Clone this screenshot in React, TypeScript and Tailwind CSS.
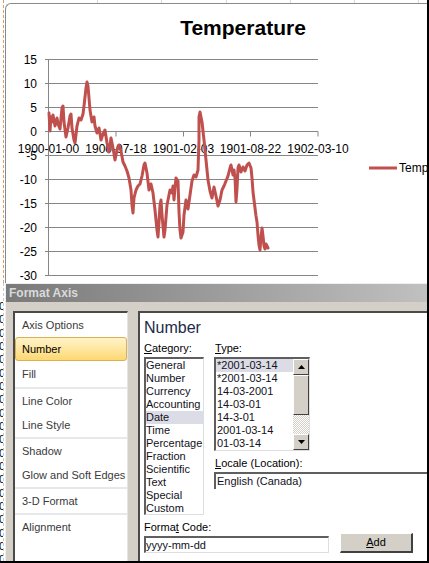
import React from "react";

const pts: [number, number][] = [
  [49, 113], [50, 131], [51, 117], [52, 122], [53, 115], [55, 126], [57, 118], [58, 124], [60, 129],
  [62, 108], [63, 106], [64, 122], [66, 137], [68, 128], [70, 116], [71, 114], [72, 128], [74, 140],
  [75, 143], [77, 126], [79, 118], [81, 120], [83, 114], [84, 106], [85, 97], [86, 88], [87, 82],
  [88, 86], [89, 98], [90, 110], [92, 122], [94, 117], [95, 126], [97, 133], [99, 128], [101, 140],
  [103, 134], [105, 130], [107, 143], [109, 152], [111, 138], [113, 148], [115, 160], [117, 150],
  [119, 145], [121, 151], [123, 162], [125, 166], [127, 171], [129, 178], [131, 190], [132, 205],
  [133, 213], [134, 198], [136, 190], [138, 186], [140, 184], [142, 176], [144, 165], [145, 163],
  [147, 173], [149, 190], [151, 184], [153, 193], [155, 210], [157, 230], [158, 237], [159, 222],
  [160, 205], [161, 200], [162, 215], [164, 237], [165, 230], [167, 205], [169, 195], [170, 190],
  [172, 193], [173, 186], [174, 200], [175, 188], [176, 178], [178, 181], [179, 212], [180, 230],
  [181, 238], [183, 232], [184, 215], [186, 200], [188, 209], [190, 195], [192, 181], [194, 175],
  [196, 177], [198, 170], [199, 140], [199, 117], [200, 112], [202, 122], [204, 140], [206, 160],
  [208, 180], [210, 191], [212, 198], [214, 187], [216, 196], [218, 206], [220, 200], [222, 190],
  [224, 186], [226, 181], [228, 176], [230, 168], [231, 165], [233, 175], [234, 170], [235, 178],
  [236, 202], [237, 189], [238, 168], [239, 165], [241, 172], [243, 167], [245, 171], [247, 165],
  [249, 163], [251, 168], [252, 178], [253, 192], [254, 200], [255, 208], [256, 216], [257, 222],
  [258, 235], [259, 245], [260, 250], [261, 238], [262, 228], [263, 236], [264, 246], [265, 249],
  [266, 244], [268, 248],
];
const lineD = "M" + pts.map(([x, y]) => `${x} ${y}`).join(" L");

const yLabels = [15, 10, 5, 0, -5, -10, -15, -20, -25, -30];
const xTicks = [48.5, 116, 183.5, 250.5, 318];
const xLabels = ["1900-01-00", "1900-07-18", "1901-02-03", "1901-08-22", "1902-03-10"];

function Chart() {
  return (
    <div className="h-[280px] border-l border-t border-[#8a8a8a] rounded-tl-[6px] bg-white overflow-hidden">
      <svg width="421" height="279" viewBox="6 4 421 279" className="block">
        <text x="243" y="35" textAnchor="middle" fontSize="21" fontWeight="700" fill="#000">
          Temperature
        </text>
        {yLabels.map((v, i) => {
          const y = 59.5 + 24 * i;
          return (
            <g key={v}>
              <line x1="45" x2="318" y1={y} y2={y} stroke="#868686" strokeWidth="1" />
              <text x="37" y={y + 4.5} textAnchor="end" fontSize="12" fill="#000">
                {v}
              </text>
            </g>
          );
        })}
        <line x1="48.5" x2="48.5" y1="59.5" y2="275.5" stroke="#868686" strokeWidth="1" />
        {xTicks.map((x) => (
          <line key={x} x1={x} x2={x} y1="131.5" y2="136.5" stroke="#868686" strokeWidth="1" />
        ))}
        {xLabels.map((l, i) => (
          <text key={l} x={xTicks[i]} y="152.5" textAnchor="middle" fontSize="12" fill="#000">
            {l}
          </text>
        ))}
        <path d={lineD} fill="none" stroke="#c0504d" strokeWidth="3" strokeLinejoin="round" strokeLinecap="round" />
        <line x1="369" x2="397" y1="168" y2="168" stroke="#c0504d" strokeWidth="3" />
        <text x="399" y="172" fontSize="12" fill="#000">
          Temperature
        </text>
      </svg>
    </div>
  );
}

function MenuItem({ label, h }: { label: string; h: string }) {
  return (
    <div className={`${h} flex items-center pl-[7px] text-[11px] text-[#3a3a3a]`}>{label}</div>
  );
}

function Sep() {
  return <div className="h-[2px] bg-[#e6e8ea]" />;
}

function LeftPanel() {
  return (
    <div className="w-[115px] shrink-0 bg-white border-t-2 border-l-2 border-r border-t-[#4a4a4a] border-l-[#4a4a4a] border-r-[#e4e4e4] overflow-hidden">
      <MenuItem label="Axis Options" h="h-[24px]" />
      <div className="h-[24px] flex items-center pl-[6px] text-[11px] text-black border border-[#dcae55] rounded-[3px] bg-linear-to-b from-[#fff4c8] to-[#fdd872]">
        Number
      </div>
      <MenuItem label="Fill" h="h-[26px]" />
      <Sep />
      <MenuItem label="Line Color" h="h-[24px]" />
      <MenuItem label="Line Style" h="h-[24px]" />
      <Sep />
      <MenuItem label="Shadow" h="h-[24px]" />
      <MenuItem label="Glow and Soft Edges" h="h-[24px]" />
      <Sep />
      <MenuItem label="3-D Format" h="h-[24px]" />
      <Sep />
      <MenuItem label="Alignment" h="h-[24px]" />
    </div>
  );
}

const categories = [
  "General", "Number", "Currency", "Accounting", "Date", "Time",
  "Percentage", "Fraction", "Scientific", "Text", "Special", "Custom",
];
const types = ["*2001-03-14", "*2001-03-14", "14-03-2001", "14-03-01", "14-3-01", "2001-03-14", "01-03-14"];

function Arrow({ up }: { up: boolean }) {
  return (
    <svg width="7" height="4" viewBox="0 0 7 4" className="block">
      {up ? <polygon points="3.5,0 7,4 0,4" fill="#000" /> : <polygon points="0,0 7,0 3.5,4" fill="#000" />}
    </svg>
  );
}

function RightPanel() {
  return (
    <div className="flex-1 ml-[10px] bg-white border-t-2 border-l-2 border-[#4a4a4a] overflow-hidden pl-[4px] pt-[5px] text-[#111122]">
      <div className="text-[16px] leading-[20px] text-[#1c2a48]">Number</div>
      <div className="mt-[3px] flex gap-[10px]">
        <div className="w-[60px] shrink-0">
          <div className="text-[11px] leading-[14px] text-black">
            <span className="underline">C</span>ategory:
          </div>
          <div className="mt-[2px] h-[158px] overflow-hidden border-t-2 border-l-2 border-r border-b border-t-[#5f5f5f] border-l-[#5f5f5f] border-r-[#dedede] border-b-[#dedede]">
            {categories.map((c) => (
              <div
                key={c}
                className={`h-[13px] text-[11px] leading-[13px] whitespace-nowrap ${c === "Date" ? "bg-[#dcdce6]" : ""}`}
              >
                {c}
              </div>
            ))}
          </div>
        </div>
        <div className="flex-1 min-w-0">
          <div className="text-[11px] leading-[14px] text-black pl-[1px]">
            <span className="underline">T</span>ype:
          </div>
          <div className="mt-[2px] w-[96px] h-[94px] flex border-t-2 border-l-2 border-r border-b border-t-[#5f5f5f] border-l-[#5f5f5f] border-r-[#dedede] border-b-[#dedede]">
            <div className="flex-1 overflow-hidden">
              {types.map((t, i) => (
                <div
                  key={i}
                  className={`h-[13px] pl-[1px] text-[11px] leading-[13px] whitespace-nowrap ${i === 0 ? "bg-[#dcdce6]" : ""}`}
                >
                  {t}
                </div>
              ))}
            </div>
            <div className="w-[16px] flex flex-col">
              <div className="h-[16px] flex items-center justify-center bg-[#d4d0c8] border-t border-l border-r border-b border-t-white border-l-white border-r-[#404040] border-b-[#404040]">
                <Arrow up />
              </div>
              <div className="h-[40px] bg-[#d4d0c8] border-t border-l border-r border-b border-t-white border-l-white border-r-[#404040] border-b-[#404040]" />
              <div className="flex-1 bg-[repeating-conic-gradient(#d4d0c8_0%_25%,#ffffff_0%_50%)] bg-[length:2px_2px]" />
              <div className="h-[16px] flex items-center justify-center bg-[#d4d0c8] border-t border-l border-r border-b border-t-white border-l-white border-r-[#404040] border-b-[#404040]">
                <Arrow up={false} />
              </div>
            </div>
          </div>
          <div className="mt-[5px] text-[11px] leading-[14px] text-black pl-[1px]">
            <span className="underline">L</span>ocale (Location):
          </div>
          <div className="mt-[2px] w-[240px] h-[17px] border-t-2 border-l-2 border-[#5f5f5f] text-[11px] leading-[14px] pl-[1px] whitespace-nowrap">
            English (Canada)
          </div>
        </div>
      </div>
      <div className="mt-[5px] text-[11px] leading-[14px] text-black">
        Forma<span className="underline">t</span> Code:
      </div>
      <div className="mt-[-1px] flex items-end">
        <div className="w-[185px] h-[17px] border-t-2 border-l-2 border-r border-b border-t-[#5f5f5f] border-l-[#5f5f5f] border-r-[#dedede] border-b-[#dedede] text-[11px] leading-[14px] whitespace-nowrap">
          yyyy-mm-dd
        </div>
        <div className="ml-[11px] w-[73px] h-[20px] flex items-center justify-center bg-[#d4d0c8] border-t border-l border-r-2 border-b-2 border-t-white border-l-white border-r-[#404040] border-b-[#404040] text-[11px] text-black">
          <span>
            <span className="underline">A</span>dd
          </span>
        </div>
      </div>
    </div>
  );
}

function Dialog() {
  return (
    <div className="flex-1 min-h-0 flex flex-col border-l border-t border-[#efefef] bg-[#d4d0c8]">
      <div className="h-[18px] shrink-0 bg-linear-to-r from-[#7a7a7a] to-[#c0c0c0] pl-[3px] flex items-center text-[12px] font-bold text-[#dadada]">
        Format Axis
      </div>
      <div className="flex-1 min-h-0 flex pt-[9px] pl-[7px]">
        <LeftPanel />
        <RightPanel />
      </div>
    </div>
  );
}

export default function App() {
  const marks = Array.from({ length: 20 });
  return (
    <div className="w-[429px] h-[563px] flex overflow-hidden bg-white border-r-2 border-b-2 border-black font-['Liberation_Sans',Arial,sans-serif]">
      <div className="w-[5px] shrink-0 flex flex-col overflow-hidden">
        <div className="h-[283px] shrink-0 w-[4px] border-r border-dashed border-[#e0a060]" />
        <div className="flex-1 w-[4px] overflow-hidden border-r border-dashed border-[#c8c8c8] pt-[17px]">
          {marks.map((_, i) => (
            <div key={i} className="h-[13.33px] text-[11px] leading-[13.33px] ml-[-1px] text-black">
              0
            </div>
          ))}
        </div>
      </div>
      <div className="flex-1 min-w-0 flex flex-col">
        <div className="h-[3px] shrink-0 flex">
          <div className="w-[93px] border-r border-[#d0d7e5]" />
          <div className="w-[64px] border-r border-[#d0d7e5]" />
          <div className="w-[65px] border-r border-[#d0d7e5]" />
          <div className="w-[64px] border-r border-[#d0d7e5]" />
          <div className="w-[64px] border-r border-[#d0d7e5]" />
          <div className="w-[64px] border-r border-[#d0d7e5]" />
        </div>
        <Chart />
        <Dialog />
      </div>
    </div>
  );
}
